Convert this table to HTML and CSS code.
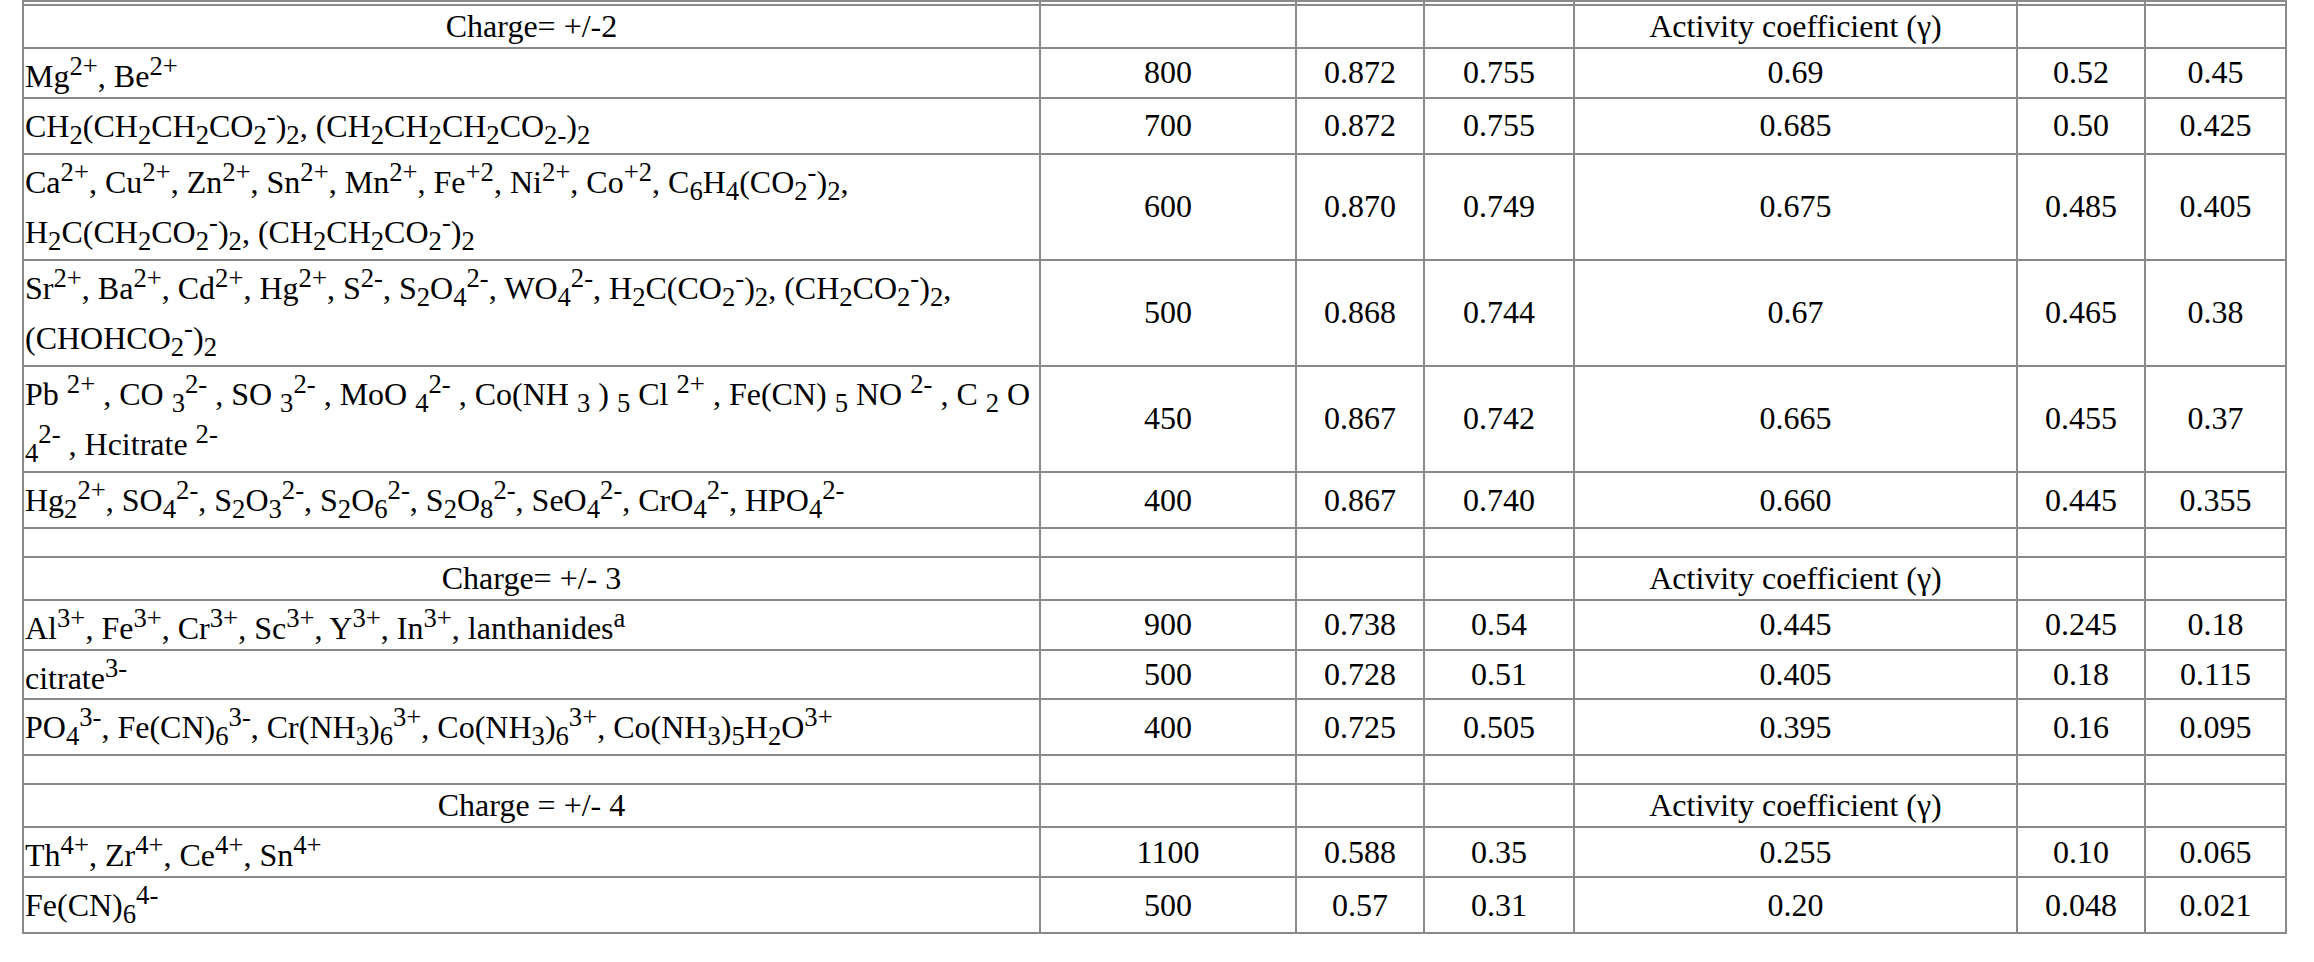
FILE: index.html
```html
<!DOCTYPE html>
<html>
<head>
<meta charset="utf-8">
<title>Activity coefficients</title>
<link rel="stylesheet" href="styles.css">
</head>
<body>
<table class="ions">
<colgroup>
<col class="c-ion"><col class="c-size"><col class="c-a"><col class="c-b"><col class="c-c"><col class="c-d"><col class="c-e">
</colgroup>
<tbody>
<tr class="cut"><td></td><td></td><td></td><td></td><td></td><td></td><td></td></tr>
<tr class="head"><td class="mid">Charge= +/-2</td><td></td><td></td><td></td><td class="mid">Activity coefficient (γ)</td><td></td><td></td></tr>
<tr><td>Mg<sup>2+</sup>, Be<sup>2+</sup></td><td class="mid">800</td><td class="mid">0.872</td><td class="mid">0.755</td><td class="mid">0.69</td><td class="mid">0.52</td><td class="mid">0.45</td></tr>
<tr><td>CH<sub>2</sub>(CH<sub>2</sub>CH<sub>2</sub>CO<sub>2</sub><sup>-</sup>)<sub>2</sub>, (CH<sub>2</sub>CH<sub>2</sub>CH<sub>2</sub>CO<sub>2</sub><sub>-</sub>)<sub>2</sub></td><td class="mid">700</td><td class="mid">0.872</td><td class="mid">0.755</td><td class="mid">0.685</td><td class="mid">0.50</td><td class="mid">0.425</td></tr>
<tr><td>Ca<sup>2+</sup>, Cu<sup>2+</sup>, Zn<sup>2+</sup>, Sn<sup>2+</sup>, Mn<sup>2+</sup>, Fe<sup>+2</sup>, Ni<sup>2+</sup>, Co<sup>+2</sup>, C<sub>6</sub>H<sub>4</sub>(CO<sub>2</sub><sup>-</sup>)<sub>2</sub>, H<sub>2</sub>C(CH<sub>2</sub>CO<sub>2</sub><sup>-</sup>)<sub>2</sub>, (CH<sub>2</sub>CH<sub>2</sub>CO<sub>2</sub><sup>-</sup>)<sub>2</sub></td><td class="mid">600</td><td class="mid">0.870</td><td class="mid">0.749</td><td class="mid">0.675</td><td class="mid">0.485</td><td class="mid">0.405</td></tr>
<tr><td>Sr<sup>2+</sup>, Ba<sup>2+</sup>, Cd<sup>2+</sup>, Hg<sup>2+</sup>, S<sup>2-</sup>, S<sub>2</sub>O<sub>4</sub><sup>2-</sup>, WO<sub>4</sub><sup>2-</sup>, H<sub>2</sub>C(CO<sub>2</sub><sup>-</sup>)<sub>2</sub>, (CH<sub>2</sub>CO<sub>2</sub><sup>-</sup>)<sub>2</sub>, (CHOHCO<sub>2</sub><sup>-</sup>)<sub>2</sub></td><td class="mid">500</td><td class="mid">0.868</td><td class="mid">0.744</td><td class="mid">0.67</td><td class="mid">0.465</td><td class="mid">0.38</td></tr>
<tr><td>Pb <sup>2+</sup> , CO <sub>3</sub><sup>2-</sup> , SO <sub>3</sub><sup>2-</sup> , MoO <sub>4</sub><sup>2-</sup> , Co(NH <sub>3</sub> ) <sub>5</sub> Cl <sup>2+</sup> , Fe(CN) <sub>5</sub> NO <sup>2-</sup> , C <sub>2</sub> O <sub>4</sub><sup>2-</sup> , Hcitrate <sup>2-</sup></td><td class="mid">450</td><td class="mid">0.867</td><td class="mid">0.742</td><td class="mid">0.665</td><td class="mid">0.455</td><td class="mid">0.37</td></tr>
<tr><td>Hg<sub>2</sub><sup>2+</sup>, SO<sub>4</sub><sup>2-</sup>, S<sub>2</sub>O<sub>3</sub><sup>2-</sup>, S<sub>2</sub>O<sub>6</sub><sup>2-</sup>, S<sub>2</sub>O<sub>8</sub><sup>2-</sup>, SeO<sub>4</sub><sup>2-</sup>, CrO<sub>4</sub><sup>2-</sup>, HPO<sub>4</sub><sup>2-</sup></td><td class="mid">400</td><td class="mid">0.867</td><td class="mid">0.740</td><td class="mid">0.660</td><td class="mid">0.445</td><td class="mid">0.355</td></tr>
<tr class="gap"><td></td><td></td><td></td><td></td><td></td><td></td><td></td></tr>
<tr class="head"><td class="mid">Charge= +/- 3</td><td></td><td></td><td></td><td class="mid">Activity coefficient (γ)</td><td></td><td></td></tr>
<tr><td>Al<sup>3+</sup>, Fe<sup>3+</sup>, Cr<sup>3+</sup>, Sc<sup>3+</sup>, Y<sup>3+</sup>, In<sup>3+</sup>, lanthanides<sup>a</sup></td><td class="mid">900</td><td class="mid">0.738</td><td class="mid">0.54</td><td class="mid">0.445</td><td class="mid">0.245</td><td class="mid">0.18</td></tr>
<tr><td>citrate<sup>3-</sup></td><td class="mid">500</td><td class="mid">0.728</td><td class="mid">0.51</td><td class="mid">0.405</td><td class="mid">0.18</td><td class="mid">0.115</td></tr>
<tr><td>PO<sub>4</sub><sup>3-</sup>, Fe(CN)<sub>6</sub><sup>3-</sup>, Cr(NH<sub>3</sub>)<sub>6</sub><sup>3+</sup>, Co(NH<sub>3</sub>)<sub>6</sub><sup>3+</sup>, Co(NH<sub>3</sub>)<sub>5</sub>H<sub>2</sub>O<sup>3+</sup></td><td class="mid">400</td><td class="mid">0.725</td><td class="mid">0.505</td><td class="mid">0.395</td><td class="mid">0.16</td><td class="mid">0.095</td></tr>
<tr class="gap"><td></td><td></td><td></td><td></td><td></td><td></td><td></td></tr>
<tr class="head"><td class="mid">Charge = +/- 4</td><td></td><td></td><td></td><td class="mid">Activity coefficient (γ)</td><td></td><td></td></tr>
<tr><td>Th<sup>4+</sup>, Zr<sup>4+</sup>, Ce<sup>4+</sup>, Sn<sup>4+</sup></td><td class="mid">1100</td><td class="mid">0.588</td><td class="mid">0.35</td><td class="mid">0.255</td><td class="mid">0.10</td><td class="mid">0.065</td></tr>
<tr><td>Fe(CN)<sub>6</sub><sup>4-</sup></td><td class="mid">500</td><td class="mid">0.57</td><td class="mid">0.31</td><td class="mid">0.20</td><td class="mid">0.048</td><td class="mid">0.021</td></tr>
</tbody>
</table>
</body>
</html>
```

FILE: styles.css
```css
html, body {
  margin: 0;
  padding: 0;
  background: #ffffff;
}

body {
  font-family: "Liberation Serif", "Times New Roman", serif;
  font-size: 32px;
  color: #000000;
}

.ions {
  margin-left: 22px;
  width: 2265px;
  table-layout: fixed;
  border-collapse: separate;
  border-spacing: 0;
  border: 1px solid #8a8a8a;
  font-family: "Liberation Serif", "Times New Roman", serif;
}

.ions td {
  border: 1px solid #8a8a8a;
  padding: 2px 1px 2px;
  vertical-align: middle;
  text-align: left;
  font-family: "Liberation Serif", "Times New Roman", serif;
}

.ions td.mid {
  text-align: center;
}

.c-ion { width: 1017px; }
.c-size { width: 256px; }
.c-a { width: 128px; }
.c-b { width: 150px; }
.c-c { width: 443px; }
.c-d { width: 128px; }
.c-e { width: 141px; }

.cut td {
  height: 2px;
  padding: 0;
}

.gap td {
  height: 27px;
  padding: 0;
}
```
